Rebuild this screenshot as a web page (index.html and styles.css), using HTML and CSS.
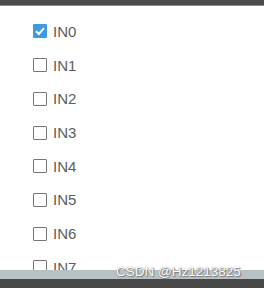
FILE: index.html
```html
<!DOCTYPE html>
<html lang="en">
<head>
    <meta charset="UTF-8">
    <meta name="viewport" content="width=device-width, initial-scale=1.0">
    <title>Inputs</title>
    <link rel="stylesheet" href="styles.css">
</head>
<body>
    <div class="topbar"></div>
    <ul class="inputs">
        <li class="row"><span class="box checked"><svg viewBox="0 0 14 14" width="14" height="14"><path d="M3 7.2 L5.9 10 L11 4.2" fill="none" stroke="#fff" stroke-width="2"/></svg></span>IN0</li>
        <li class="row"><span class="box"></span>IN1</li>
        <li class="row"><span class="box"></span>IN2</li>
        <li class="row"><span class="box"></span>IN3</li>
        <li class="row"><span class="box"></span>IN4</li>
        <li class="row"><span class="box"></span>IN5</li>
        <li class="row"><span class="box"></span>IN6</li>
        <li class="row"><span class="box"></span>IN7</li>
    </ul>
    <div class="footer">
        <div class="footer-light"></div>
        <div class="footer-dark"></div>
        <span class="mark">CSDN @Hz1213825</span>
    </div>
</body>
</html>
```

FILE: styles.css
```css
html, body {
    margin: 0;
    height: 100%;
    overflow: hidden;
}
body {
    font-family: "Liberation Sans", Arial, sans-serif;
    background: #fff;
    position: relative;
}
.topbar {
    height: 5px;
    background: #4c4c4c;
    border-bottom: 1px solid #8a8a8a;
}
.inputs {
    list-style: none;
    margin: 0;
    padding: 8.6px 0 0 33px;
}
.row {
    height: 33.7px;
    display: flex;
    align-items: center;
    font-size: 15px;
    color: #5c5c5c;
}
.box {
    width: 12px;
    height: 12px;
    border: 1px solid #767676;
    border-radius: 1px;
    margin-right: 6px;
    box-sizing: content-box;
    display: flex;
}
.box.checked {
    width: 14px;
    height: 14px;
    border: none;
    background: #3c9ce2;
}
.footer {
    position: absolute;
    left: 0;
    right: 0;
    bottom: 0;
    height: 18px;
}
.footer-light {
    height: 9px;
    background: #b8c2c5;
}
.footer-dark {
    height: 9px;
    background: #484848;
}
.mark {
    position: absolute;
    left: 116px;
    top: -6px;
    font-size: 13.5px;
    color: #fff;
    text-shadow: 0 0 1px #666, 1px 1px 1px #777;
}
```
